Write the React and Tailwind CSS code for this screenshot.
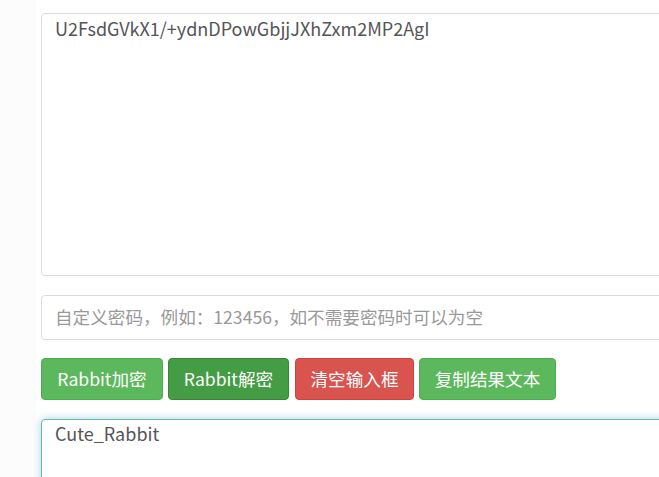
export default function App() {
  const font = { fontFamily: '"Microsoft YaHei", "Noto Sans CJK SC", "Noto Sans", sans-serif' };
  return (
    <div className="w-[659px] h-[477px] overflow-hidden bg-[#fcfcfc] flex" style={font}>
      <div className="ml-[36px] flex-1 bg-white pl-[5px] pt-[13px] flex flex-col">
        <div className="w-[700px] h-[263px] shrink-0 rounded-[4px] border border-[#dcdcdc] bg-white px-[13px] pt-[2px] text-[18px] leading-[24px] text-[#555]">
          U2FsdGVkX1/+ydnDPowGbjjJXhZxm2MP2AgI
        </div>
        <div className="mt-[19px] w-[700px] h-[45px] shrink-0 rounded-[4px] border border-[#dcdcdc] bg-white px-[13px] flex items-center text-[17.6px] text-[#999]">
          自定义密码，例如：123456，如不需要密码时可以为空
        </div>
        <div className="mt-[18px] flex gap-[5px] shrink-0">
          <button className="h-[42px] w-[122px] rounded-[4px] border border-[#4cae4c] bg-[#5cb85c] text-white text-[17.6px]">Rabbit加密</button>
          <button className="h-[42px] w-[121px] rounded-[4px] border border-[#398439] bg-[#449d44] text-white text-[17.6px]">Rabbit解密</button>
          <button className="ml-[1px] h-[42px] w-[119px] rounded-[4px] border border-[#d43f3a] bg-[#d9534f] text-white text-[17.6px]">清空输入框</button>
          <button className="h-[42px] w-[137px] rounded-[4px] border border-[#4cae4c] bg-[#5cb85c] text-white text-[17.6px]">复制结果文本</button>
        </div>
        <div className="mt-[19px] w-[700px] h-[120px] shrink-0 rounded-[4px] border border-[#66bf99] bg-white px-[13px] pt-0 text-[18px] leading-[26px] text-[#555] shadow-[0_0_8px_rgba(102,175,233,0.6)]">
          Cute_Rabbit
        </div>
      </div>
    </div>
  );
}
